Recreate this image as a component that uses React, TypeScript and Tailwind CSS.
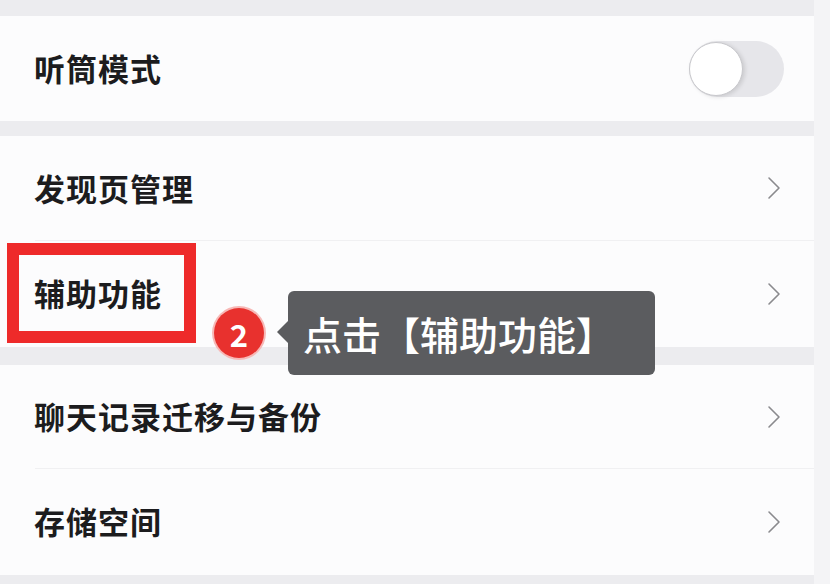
import { ReactNode } from 'react';

const font = { fontFamily: '"Noto Sans CJK SC", "Noto Sans", sans-serif' };

function Chevron() {
  return (
    <svg width="14" height="24" viewBox="0 0 14 24" className="mr-[33px]">
      <path d="M2 2 L12 12 L2 22" fill="none" stroke="#8a8a8e" strokeWidth="1.6" strokeLinecap="round" strokeLinejoin="round" />
    </svg>
  );
}

function Toggle() {
  return (
    <div className="mr-[30px] w-[95px] h-[56px] rounded-full bg-[#e6e6ea] relative">
      <div className="absolute left-0 top-[1px] w-[54px] h-[54px] rounded-full bg-white border border-[#c8c8cc] shadow-[2px_1px_4px_rgba(0,0,0,0.12)]" />
    </div>
  );
}

function Row({ label, height, right, divider }: { label: string; height: string; right: ReactNode; divider?: boolean }) {
  return (
    <div className={`relative flex items-center justify-between bg-[#fcfcfd] ${height}`}>
      {divider && <div className="absolute top-0 left-[35px] right-0 h-px bg-[#f0f0f2]" />}
      <span className="pl-[34px] text-[31px] font-semibold text-[#1c1c1e] tracking-[1px]">{label}</span>
      {right}
    </div>
  );
}

export default function App() {
  return (
    <div className="w-[830px] h-[584px] flex bg-[#f4f4f6] overflow-hidden relative" style={font}>
      <div className="w-[814px] flex flex-col">
        <div className="h-[16px] bg-[#ececef]" />
        <Row label="听筒模式" height="h-[105px]" right={<Toggle />} />
        <div className="h-[15px] bg-[#ececef]" />
        <Row label="发现页管理" height="h-[104px]" right={<Chevron />} />
        <Row label="辅助功能" height="h-[107px]" right={<Chevron />} divider />
        <div className="h-[18px] bg-[#ececef]" />
        <Row label="聊天记录迁移与备份" height="h-[103px]" right={<Chevron />} />
        <Row label="存储空间" height="h-[107px]" right={<Chevron />} divider />
        <div className="flex-1 bg-[#ececef]" />
      </div>

      {/* annotation: red highlight box */}
      <div className="absolute left-[7px] top-[243px] w-[189px] h-[100px] border-[12px] border-[#ee2a2a]" />

      {/* annotation: step badge */}
      <div className="absolute left-[214px] top-[308px] w-[50px] h-[50px] rounded-full bg-[#e8312e] ring-2 ring-[#f7b8b6] flex items-center justify-center">
        <span className="text-white text-[31px] font-semibold leading-none">2</span>
      </div>

      {/* annotation: tooltip */}
      <div className="absolute left-[288px] top-[291px] w-[367px] h-[84px] rounded-[6px] bg-[#5b5c5f] flex items-center pl-[15px]">
        <div className="absolute left-[-11px] top-[30px] w-0 h-0 border-y-[11px] border-y-transparent border-r-[11px] border-r-[#5b5c5f]" />
        <span className="text-white text-[39px] font-medium leading-none">点击【辅助功能】</span>
      </div>
    </div>
  );
}
